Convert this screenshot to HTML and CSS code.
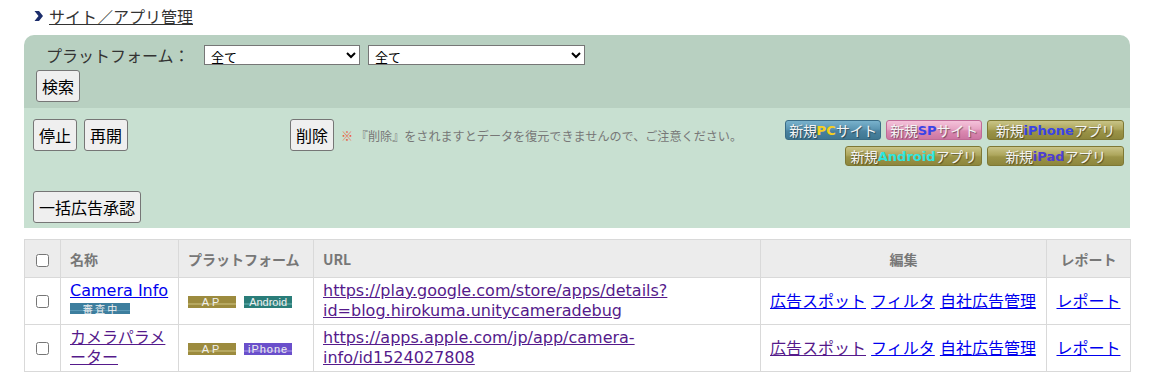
FILE: index.html
```html
<!DOCTYPE html>
<html lang="ja">
<head>
<meta charset="utf-8">
<title>サイト／アプリ管理</title>
<link rel="stylesheet" href="styles.css">
</head>
<body>
<div class="page">
  <div class="crumb">
    <svg class="chev" width="9" height="10" viewBox="0 0 9 10"><path d="M0.5 0 L5 0 L9 5 L5 10 L0.5 10 L4.5 5 Z" fill="#1c2d6b"/></svg>
    <a class="crumb-link" href="#">サイト／アプリ管理</a>
  </div>

  <div class="panel">
    <div class="search">
      <div class="search-row">
        <span class="label">プラットフォーム：</span>
        <select class="sel sel1"><option>全て</option></select>
        <select class="sel sel2"><option>全て</option></select>
      </div>
      <button class="btn">検索</button>
    </div>

    <div class="actions">
      <div class="actions-top">
        <div class="group">
          <button class="btn">停止</button>
          <button class="btn">再開</button>
        </div>
        <div class="group del-group">
          <button class="btn">削除</button>
          <span class="note"><span class="mark">※</span> 『削除』をされますとデータを復元できませんので、ご注意ください。</span>
        </div>
        <div class="newbtns">
          <span class="ibtn blue w96">新規<b class="c-yel">PC</b>サイト</span>
          <span class="ibtn pink w96">新規<b class="c-blu">SP</b>サイト</span>
          <span class="ibtn olive w137">新規<b class="c-blu">iPhone</b>アプリ</span>
          <span class="ibtn olive w137">新規<b class="c-cyan">Android</b>アプリ</span>
          <span class="ibtn olive w137">新規<b class="c-pur">iPad</b>アプリ</span>
        </div>
      </div>
      <button class="btn">一括広告承認</button>
    </div>
  </div>

  <table class="list">
    <colgroup>
      <col class="c1"><col class="c2"><col class="c3"><col class="c4"><col class="c5"><col class="c6">
    </colgroup>
    <thead>
      <tr>
        <th class="chk"><input type="checkbox"></th>
        <th>名称</th>
        <th>プラットフォーム</th>
        <th>URL</th>
        <th class="center">編集</th>
        <th class="center">レポート</th>
      </tr>
    </thead>
    <tbody>
      <tr>
        <td class="chk"><input type="checkbox"></td>
        <td><a href="#">Camera Info</a><br><span class="tag review">審 査 中</span></td>
        <td><span class="tag ap">AP</span> <span class="tag android">Android</span></td>
        <td><a class="visited" href="#">https://play.google.com/store/apps/details?<br>id=blog.hirokuma.unitycameradebug</a></td>
        <td class="edit"><a href="#">広告スポット</a> <a href="#">フィルタ</a> <a href="#">自社広告管理</a></td>
        <td class="rep"><a href="#">レポート</a></td>
      </tr>
      <tr>
        <td class="chk"><input type="checkbox"></td>
        <td><a class="visited" href="#">カメラパラメ<br>ーター</a></td>
        <td><span class="tag ap">AP</span> <span class="tag iphone">iPhone</span></td>
        <td><a class="visited" href="#">https://apps.apple.com/jp/app/camera-<br>info/id1524027808</a></td>
        <td class="edit"><a class="visited" href="#">広告スポット</a> <a href="#">フィルタ</a> <a href="#">自社広告管理</a></td>
        <td class="rep"><a href="#">レポート</a></td>
      </tr>
    </tbody>
  </table>
</div>
</body>
</html>
```

FILE: styles.css
```css
body {
  margin: 0;
  background: #fff;
  font-family: "DejaVu Sans", "Noto Sans CJK JP", sans-serif;
  color: #333;
}
.page {
  padding: 0 23px 0 24px;
}
.crumb {
  display: flex;
  align-items: center;
  height: 35px;
  padding-left: 10px;
  padding-bottom: 3px;
  box-sizing: border-box;
  gap: 6px;
}
.chev { display: block; }
.crumb-link {
  color: #333;
  font-size: 16px;
  font-family: "Noto Sans CJK JP", sans-serif;
  line-height: 20px;
}
.panel {
  border-radius: 10px 10px 0 0;
  overflow: hidden;
}
.search {
  background: #b8d0c1;
  padding: 8px 12px 5px 12px;
  height: 73px;
  box-sizing: border-box;
}
.search-row {
  display: flex;
  align-items: center;
  height: 24px;
  margin-bottom: 3px;
}
.label {
  font-family: "Noto Sans CJK JP", sans-serif;
  font-size: 16px;
  color: #333;
  margin-left: 10px;
  width: 158px;
}
.sel {
  height: 20px;
  box-sizing: border-box;
  border: 1px solid #767676;
  border-radius: 0;
  background: #fff;
  font-family: "Noto Sans CJK JP", sans-serif;
  font-size: 13px;
  padding: 0 2px;
  margin: 0 8px 0 0;
  color: #000;
}
.sel1 { width: 156px; }
.sel2 { width: 217px; }
.btn {
  font-family: "Noto Sans CJK JP", sans-serif;
  font-size: 16px;
  line-height: 20px;
  height: 32px;
  padding: 0 5px;
  border: 1px solid #767676;
  border-radius: 3px;
  background: #efefef;
  color: #000;
  margin: 0;
}
.actions {
  background: #c8e0d1;
  padding: 11px 6px 5px 9px;
  height: 120px;
  box-sizing: border-box;
}
.actions-top {
  display: flex;
  align-items: flex-start;
  height: 46px;
  margin-bottom: 26px;
}
.group {
  display: flex;
  align-items: center;
  gap: 7px;
}
.del-group {
  margin-left: 162px;
}
.note {
  font-family: "Noto Sans CJK JP", sans-serif;
  font-size: 12.1px;
  color: #777;
}
.mark { color: #e8603e; }
.newbtns {
  margin-left: auto;
  margin-top: 1px;
  width: 340px;
  display: flex;
  flex-wrap: wrap;
  justify-content: flex-end;
  gap: 6px 5px;
}
.ibtn {
  display: inline-flex;
  align-items: center;
  justify-content: center;
  height: 20px;
  box-sizing: border-box;
  border-radius: 3px;
  font-family: "Noto Sans CJK JP", sans-serif;
  font-size: 14px;
  color: #f4f4f4;
  text-shadow: 1px 1px 1px rgba(0,0,0,0.45);
  letter-spacing: -0.3px;
}
.ibtn b {
  font-family: "DejaVu Sans", sans-serif;
  font-weight: bold;
  font-size: 13px;
  text-shadow: none;
  letter-spacing: 0;
}
.w96 { width: 96px; }
.w137 { width: 137px; }
.blue {
  background: linear-gradient(#79b2cc 0%, #5b95b2 45%, #4b829f 55%, #3f7792 100%);
  border: 1px solid #3a6c86;
}
.pink {
  background: linear-gradient(#f4c2da 0%, #e7a4c4 45%, #db8ab2 55%, #cc76a2 100%);
  border: 1px solid #c06a96;
}
.olive {
  background: linear-gradient(#c9c487 0%, #ada65c 45%, #9b9448 55%, #8d863c 100%);
  border: 1px solid #7e7834;
}
.c-yel { color: #f6d01c; }
.c-blu { color: #3a44e6; }
.c-cyan { color: #2ee6e0; }
.c-pur { color: #4e3ecf; }

.list {
  margin-top: 11px;
  width: 100%;
  border-collapse: collapse;
  table-layout: fixed;
  font-size: 16px;
}
.c1 { width: 36px; }
.c2 { width: 118px; }
.c3 { width: 135px; }
.c4 { width: 447px; }
.c5 { width: 286px; }
.c6 { width: 84px; }
.list th, .list td {
  border: 1px solid #d9d9d9;
  text-align: left;
  vertical-align: middle;
}
.list th {
  background: #ececec;
  color: #777;
  font-family: "Noto Sans CJK JP", sans-serif;
  font-weight: bold;
  font-size: 14px;
  line-height: 20px;
  padding: 9px 9px 8px;
}
.list th.center { text-align: center; }
.list td {
  line-height: 20px;
  padding: 3px 9px;
  white-space: nowrap;
}
.list .chk {
  text-align: center;
  padding: 0;
}
.list input[type=checkbox] {
  margin: 0;
  width: 13px;
  height: 13px;
  vertical-align: middle;
}
.list a {
  color: #0000ee;
  font-family: "DejaVu Sans", "Noto Sans CJK JP", sans-serif;
  font-size: 16px;
}
.list a.visited { color: #551a8b; }
.list td.edit a, .list td.rep a {
  font-family: "Noto Sans CJK JP", sans-serif;
  font-size: 16px;
}
.list td.rep { text-align: center; padding: 3px 4px; }
.tag {
  display: inline-block;
  height: 12px;
  line-height: 12px;
  font-family: "Liberation Sans", "Noto Sans CJK JP", sans-serif;
  font-size: 11px;
  color: #f0f0f0;
  text-align: center;
  vertical-align: middle;
}
.ap {
  width: 48px;
  background: linear-gradient(#9c8b3e 0%, #9c8b3e 60%, #b6a860 60%, #b6a860 75%, #9c8b3e 75%);
  letter-spacing: 3px;
  margin-right: 3px;
}
.android {
  width: 48px;
  background: linear-gradient(#2a7d79 0%, #2a7d79 60%, #4b9a96 60%, #4b9a96 75%, #2a7d79 75%);
}
.iphone {
  width: 48px;
  background: linear-gradient(#6a4fcb 0%, #6a4fcb 60%, #8a74da 60%, #8a74da 75%, #6a4fcb 75%);
  letter-spacing: 1px;
}
.review {
  width: 60px;
  height: 11px;
  line-height: 11px;
  background: linear-gradient(#3d7e9e 0%, #3d7e9e 60%, #5a98b6 60%, #5a98b6 75%, #3d7e9e 75%);
  font-family: "Noto Sans CJK JP", sans-serif;
  font-size: 10px;
  vertical-align: top;
  margin-top: 2px;
}
```
